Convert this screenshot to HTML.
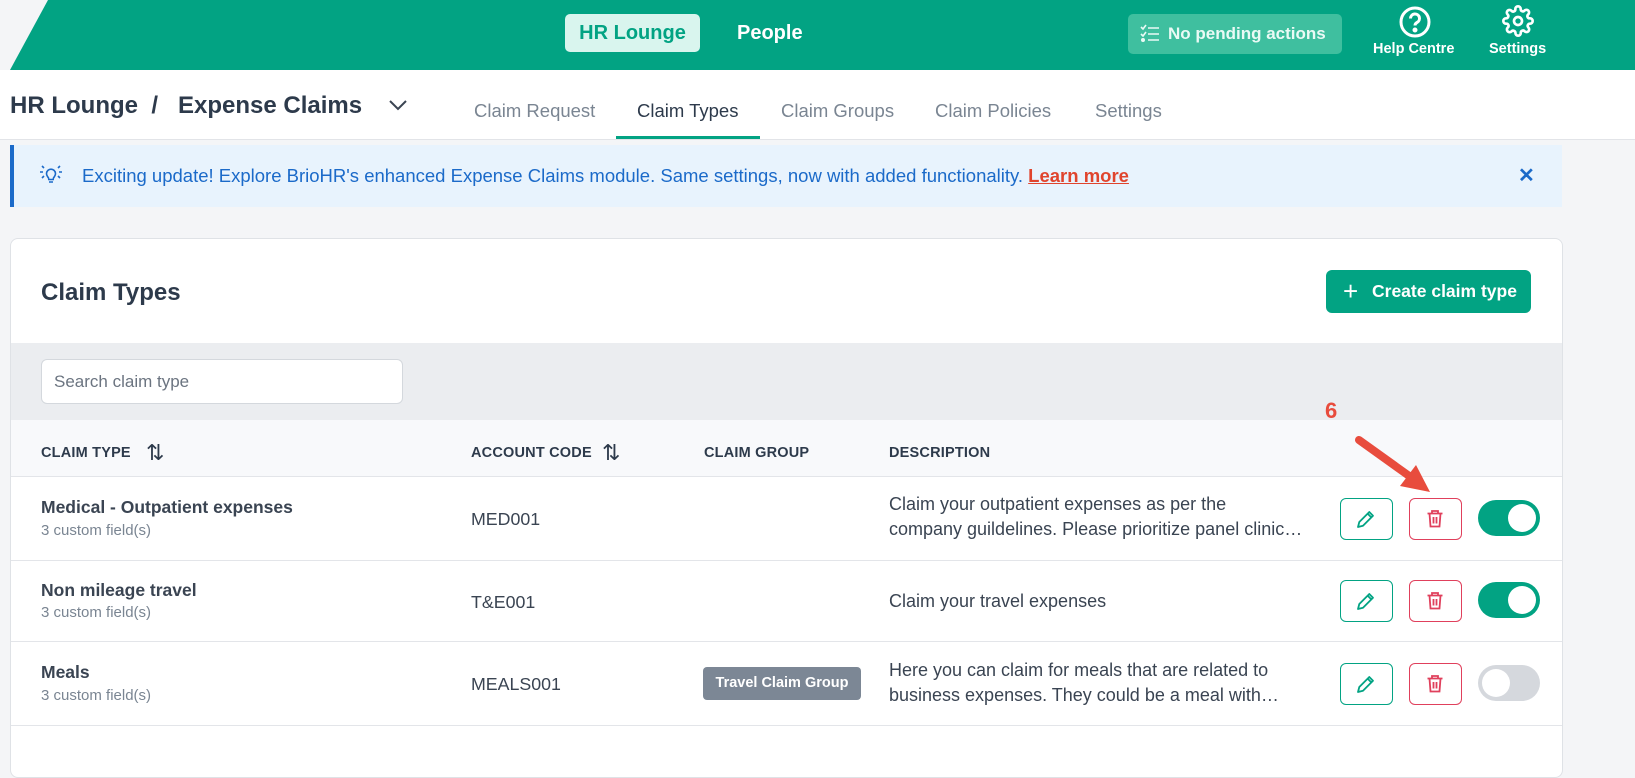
<!DOCTYPE html>
<html><head><meta charset="utf-8"><style>
*{box-sizing:border-box;margin:0;padding:0}
body{width:1635px;height:762px;overflow:hidden;background:#f4f5f7;font-family:"Liberation Sans",sans-serif;color:#2d3a4b;position:relative}
.abs{position:absolute}
.hdr{left:0;top:0;width:1635px;height:70px;background:#02a383;clip-path:polygon(48px 0,1635px 0,1635px 70px,10px 70px)}
.pill{left:565px;top:14px;width:135px;height:38px;background:#d9f5ee;border-radius:5px;color:#02a383;font-size:20px;font-weight:bold;text-align:center;line-height:38px}
.wt{color:#fff;font-weight:bold}
.pend{left:1128px;top:14px;width:214px;height:40px;background:#3fbf9f;border-radius:5px;color:#eafaf5;font-size:17px;font-weight:bold;line-height:40px;padding-left:40px}
.sub{left:0;top:70px;width:1635px;height:70px;background:#fff;border-bottom:1px solid #e2e4e8}
.tab{top:100px;font-size:18.5px;color:#7a8592}
.banner{left:10px;top:145px;width:1552px;height:62px;background:#e8f3fd;border-left:4px solid #1b6ac9}
.card{left:10px;top:238px;width:1553px;height:540px;background:#fff;border:1px solid #dfe2e6;border-radius:8px;overflow:hidden}
.th{font-size:14.5px;font-weight:bold;color:#2d3a4b;top:445px;letter-spacing:.2px}
.row{left:11px;width:1551px;height:1px;background:#e3e5e9}
.nm{left:41px;font-size:17.5px;font-weight:bold;color:#3a4452}
.cf{left:41px;font-size:15px;color:#7a8592}
.code{left:471px;font-size:17.8px;color:#3a4452}
.desc{left:889px;font-size:18px;color:#3a4452;line-height:25px;width:432px;white-space:nowrap}
.eb{width:53px;height:42px;border:1px solid #02a383;border-radius:6px;background:#fff}
.db{width:53px;height:42px;border:1px solid #e0405c;border-radius:6px;background:#fff}
.tg{width:62px;height:36px;border-radius:18px}
.tg i{position:absolute;top:4px;width:28px;height:28px;border-radius:50%;background:#fff}
</style></head><body>
<div class="abs hdr"></div>
<div class="abs pill">HR Lounge</div>
<div class="abs wt" style="left:737px;top:22px;font-size:20px">People</div>
<div class="abs pend">No pending actions</div>
<svg class="abs" style="left:1140px;top:24px" width="20" height="20" viewBox="0 0 20 20" fill="none" stroke="#eafaf5" stroke-width="1.6"><path d="M1 3l2 2 3-4M1 10l2 2 3-4M8 4h11M8 10h11M8 16h11"/><circle cx="3" cy="16" r="1.2" fill="#eafaf5"/></svg>
<svg class="abs" style="left:1398px;top:5px" width="34" height="34" viewBox="0 0 34 34" fill="none" stroke="#fff" stroke-width="3"><circle cx="17" cy="17" r="14"/><path d="M12.5 13.5a4.5 4.5 0 1 1 6.5 4c-1.5.8-2 1.6-2 3"/><circle cx="17" cy="25" r="1" fill="#fff"/></svg>
<div class="abs wt" style="left:1373px;top:41px;font-size:14.5px">Help Centre</div>
<svg class="abs" style="left:1502px;top:5px" width="32" height="32" viewBox="0 0 24 24" fill="none" stroke="#fff" stroke-width="2"><circle cx="12" cy="12" r="3"/><path d="M19.4 15a1.65 1.65 0 0 0 .33 1.82l.06.06a2 2 0 1 1-2.830 2.83l-.06-.06a1.65 1.65 0 0 0-2.82 1.17V21a2 2 0 0 1-4 0v-.09A1.65 1.65 0 0 0 9 19.4a1.65 1.65 0 0 0-1.82.33l-.06.06a2 2 0 1 1-2.83-2.83l.06-.06A1.65 1.65 0 0 0 3.18 14H3a2 2 0 0 1 0-4h.09A1.65 1.65 0 0 0 4.6 9a1.65 1.65 0 0 0-.33-1.82l-.06-.06a2 2 0 1 1 2.83-2.83l.06.06A1.65 1.65 0 0 0 10 3.18V3a2 2 0 0 1 4 0v.09a1.65 1.65 0 0 0 2.82 1.17l.06-.06a2 2 0 1 1 2.83 2.83l-.06.06A1.650 1.65 0 0 0 20.82 10H21a2 2 0 0 1 0 4h-.09a1.65 1.65 0 0 0-1.51 1z"/></svg>
<div class="abs wt" style="left:1489px;top:41px;font-size:14.5px">Settings</div>

<div class="abs sub"></div>
<div class="abs" style="left:10px;top:92px;font-size:24px;font-weight:bold;color:#2d3a4b">HR Lounge &nbsp;/ &nbsp; Expense Claims</div>
<svg class="abs" style="left:388px;top:98px" width="20" height="14" viewBox="0 0 20 14" fill="none" stroke="#3a4452" stroke-width="2"><path d="M2 3l8 8 8-8"/></svg>
<div class="abs tab" style="left:474px">Claim Request</div>
<div class="abs tab" style="left:637px;color:#2d3a4b">Claim Types</div>
<div class="abs" style="left:616px;top:136px;width:144px;height:3px;background:#02a383"></div>
<div class="abs tab" style="left:781px">Claim Groups</div>
<div class="abs tab" style="left:935px">Claim Policies</div>
<div class="abs tab" style="left:1095px">Settings</div>

<div class="abs banner"></div>
<svg class="abs" style="left:39px;top:164px" width="24" height="22" viewBox="0 0 24 22" fill="none" stroke="#1b6ac9" stroke-width="1.6"><path d="M8.5 12.5a4.5 4.5 0 1 1 7 0c-1 1-1.3 2-1.3 3h-4.4c0-1-.3-2-1.3-3zM10 18h4M1 8h3M20 8h3M3 2l2 2M21 2l-2 2M3 14l2-2M21 14l-2-2"/></svg>
<div class="abs" style="left:82px;top:165px;font-size:18.5px;color:#1b6ac9;white-space:nowrap">Exciting update! Explore BrioHR's enhanced Expense Claims module. Same settings, now with added functionality. <span style="color:#e0442d;text-decoration:underline;font-weight:bold">Learn more</span></div>
<div class="abs" style="left:1518px;top:163px;font-size:20px;color:#1b6ac9;font-weight:bold">✕</div>

<div class="abs card"></div>
<div class="abs" style="left:41px;top:279px;font-size:24px;font-weight:bold;color:#2d3a4b">Claim Types</div>
<div class="abs" style="left:1326px;top:270px;width:205px;height:43px;background:#02a383;border-radius:6px;color:#fff;font-size:17.5px;font-weight:bold;line-height:43px;padding-left:46px;white-space:nowrap">Create claim type</div>
<div class="abs wt" style="left:1343px;top:276px;font-size:26px;font-weight:normal">+</div>
<div class="abs" style="left:11px;top:343px;width:1551px;height:77px;background:#ebedf0"></div>
<div class="abs" style="left:41px;top:359px;width:362px;height:45px;background:#fff;border:1px solid #d4d8dd;border-radius:6px;font-size:17px;color:#6b7480;line-height:43px;padding-left:12px">Search claim type</div>
<div class="abs" style="left:11px;top:420px;width:1551px;height:56px;background:#f8f9fb"></div>
<div class="abs th" style="left:41px">CLAIM TYPE</div>
<div class="abs th" style="left:471px">ACCOUNT CODE</div>
<div class="abs th" style="left:704px">CLAIM GROUP</div>
<div class="abs th" style="left:889px">DESCRIPTION</div>
<div class="abs" style="left:146px;top:440px;font-size:22px;color:#2d3a4b">⇅</div>
<div class="abs" style="left:602px;top:440px;font-size:22px;color:#2d3a4b">⇅</div>
<div class="abs row" style="top:476px"></div>
<div class="abs row" style="top:560px"></div>
<div class="abs row" style="top:641px"></div>
<div class="abs row" style="top:725px"></div>

<div class="abs nm" style="top:497px">Medical - Outpatient expenses</div>
<div class="abs cf" style="top:522px">3 custom field(s)</div>
<div class="abs code" style="top:509px">MED001</div>
<div class="abs desc" style="top:492px">Claim your outpatient expenses as per the<br>company guildelines. Please prioritize panel clinic…</div>

<div class="abs nm" style="top:580px">Non mileage travel</div>
<div class="abs cf" style="top:604px">3 custom field(s)</div>
<div class="abs code" style="top:592px">T&amp;E001</div>
<div class="abs desc" style="top:589px">Claim your travel expenses</div>

<div class="abs nm" style="top:662px">Meals</div>
<div class="abs cf" style="top:687px">3 custom field(s)</div>
<div class="abs code" style="top:674px">MEALS001</div>
<div class="abs" style="left:703px;top:667px;width:158px;height:33px;background:#7c8795;border-radius:4px;color:#fff;font-size:14.5px;font-weight:bold;line-height:33px;text-align:center;white-space:nowrap">Travel Claim Group</div>
<div class="abs desc" style="top:658px">Here you can claim for meals that are related to<br>business expenses. They could be a meal with…</div>

<div class="abs eb" style="left:1340px;top:498px"></div>
<div class="abs db" style="left:1409px;top:498px"></div>
<div class="abs tg" style="left:1478px;top:500px;background:#02a383"><i style="left:30px"></i></div>
<div class="abs eb" style="left:1340px;top:580px"></div>
<div class="abs db" style="left:1409px;top:580px"></div>
<div class="abs tg" style="left:1478px;top:582px;background:#02a383"><i style="left:30px"></i></div>
<div class="abs eb" style="left:1340px;top:663px"></div>
<div class="abs db" style="left:1409px;top:663px"></div>
<div class="abs tg" style="left:1478px;top:665px;background:#d5d8dd"><i style="left:4px"></i></div>

<svg class="abs" style="left:0;top:0" width="1635" height="762" fill="none">
<defs>
<g id="pen" stroke="#02a383" stroke-width="1.8" stroke-linejoin="round"><path d="M-8 8l1.3-5 10-10 3.7 3.7-10 10z M1.5 -5.5l3.7 3.7"/></g>
<g id="bin" stroke="#e0405c" stroke-width="1.8"><path d="M-7.5 -5.5h15M-3 -5.5v-2.5h6v2.5M-5.5 -5.5l1 13h9l1-13M-1.5 -2v6.5M1.5 -2v6.5"/></g>
</defs>
<use href="#pen" x="1366" y="519"/><use href="#bin" x="1435" y="519"/>
<use href="#pen" x="1366" y="601"/><use href="#bin" x="1435" y="601"/>
<use href="#pen" x="1366" y="684"/><use href="#bin" x="1435" y="684"/>
<path d="M1359 440L1412 478" stroke="#e84c3d" stroke-width="8" stroke-linecap="round"/>
<path d="M1430 492L1400 486L1416 465z" fill="#e84c3d"/>
</svg>
<div class="abs" style="left:1325px;top:398px;font-size:22px;font-weight:bold;color:#e84c3d">6</div>
</body></html>
